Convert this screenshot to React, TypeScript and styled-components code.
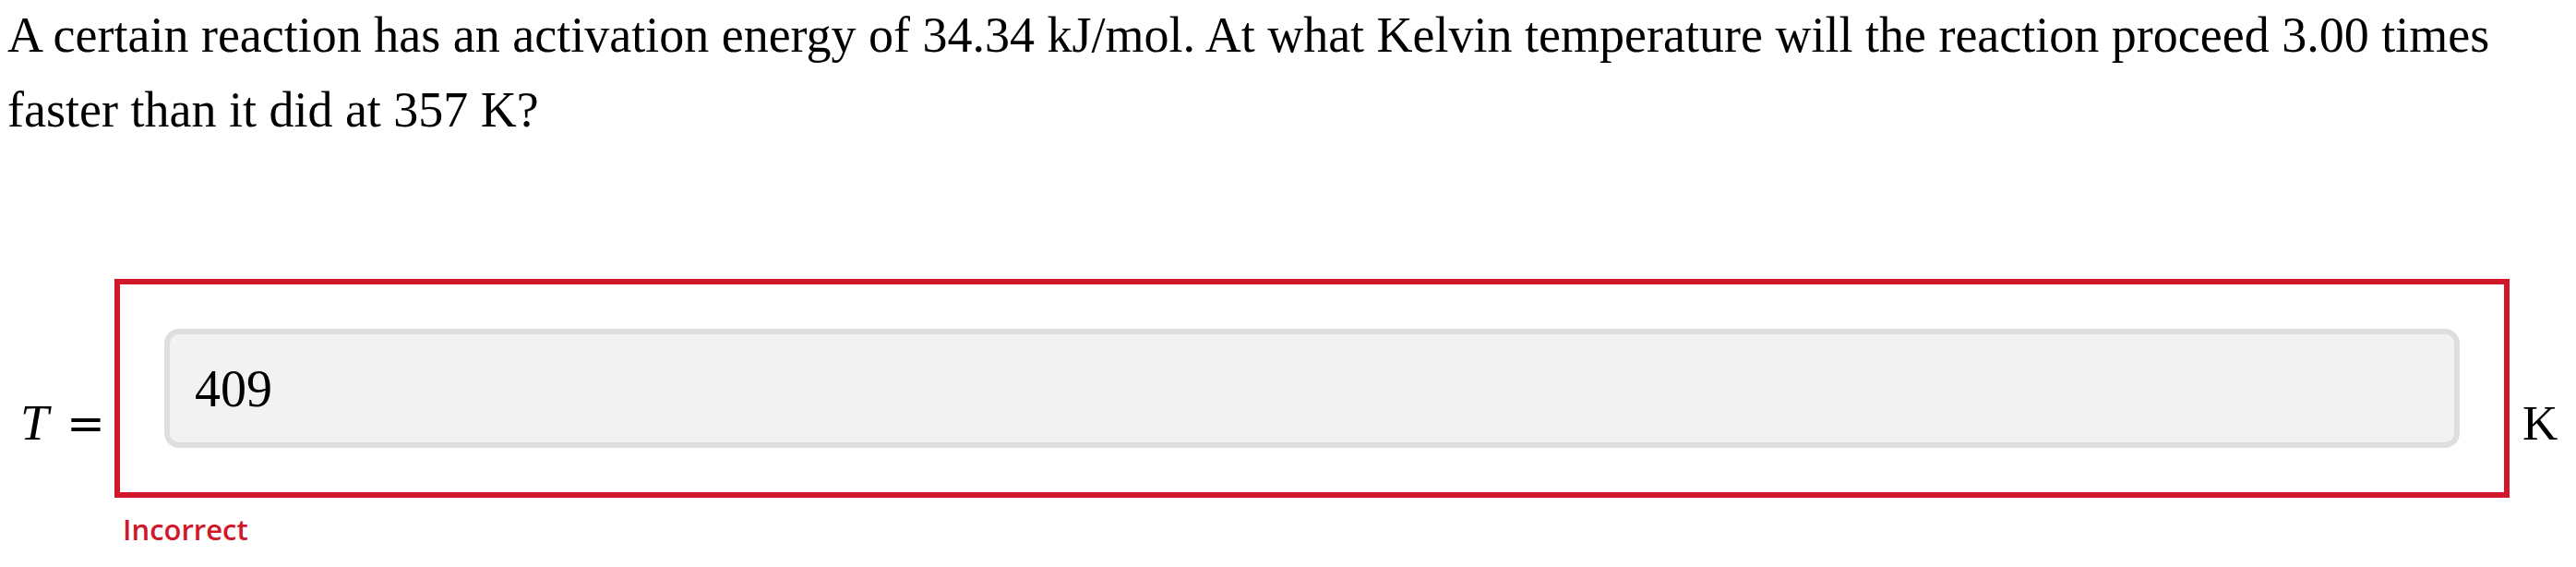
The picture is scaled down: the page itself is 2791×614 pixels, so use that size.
import React from "react";
import styled, { createGlobalStyle } from "styled-components";

const Global = createGlobalStyle`
  html, body { margin: 0; padding: 0; background: #ffffff; }
  body { font-family: "Liberation Serif", "Times New Roman", serif; color: #000; }
`;

const Page = styled.div`
  padding: 0 8px;
`;

const Question = styled.p`
  margin: -2px 0 0;
  font-size: 54px;
  line-height: 81px;
`;

const AnswerRow = styled.div`
  display: flex;
  align-items: flex-start;
  margin-top: 142px;
  padding-left: 14px;
`;

const MathLabel = styled.div`
  box-sizing: border-box;
  width: 102px;
  padding-right: 10px;
  display: flex;
  align-items: baseline;
  justify-content: space-between;
  margin-top: 126px;
  font-size: 55px;
  line-height: 60px;
`;

const Var = styled.span`
  font-style: italic;
`;

const Equals = styled.span`
  font-family: "DejaVu Serif", "Liberation Serif", serif;
  font-size: 50px;
`;

const FieldColumn = styled.div`
  display: flex;
  flex-direction: column;
`;

const FeedbackBox = styled.div<{ $state: "incorrect" | "correct" }>`
  box-sizing: border-box;
  width: 2595px;
  padding: 48px;
  border: 6px solid ${(p) => (p.$state === "incorrect" ? "#d0182a" : "#1a8a3a")};
`;

const NumberInput = styled.div`
  box-sizing: border-box;
  height: 129px;
  display: flex;
  align-items: center;
  padding: 0 27px;
  background: #f2f2f2;
  border: 6px solid #dedede;
  border-radius: 16px;
  font-size: 56px;
  color: #000;
`;

const Feedback = styled.div`
  margin-top: 14px;
  padding-left: 9px;
  font-family: "Open Sans", "Noto Sans", sans-serif;
  font-weight: 600;
  font-size: 31px;
  line-height: 40px;
  color: #d0182a;
`;

const Unit = styled.div`
  margin-top: 126px;
  margin-left: 14px;
  font-size: 53px;
  line-height: 60px;
`;

export default function App() {
  return (
    <Page>
      <Global />
      <Question>
        A certain reaction has an activation energy of 34.34 kJ/mol. At what Kelvin temperature will the
        reaction proceed 3.00 times faster than it did at 357 K?
      </Question>
      <AnswerRow>
        <MathLabel>
          <Var>T</Var>
          <Equals>=</Equals>
        </MathLabel>
        <FieldColumn>
          <FeedbackBox $state="incorrect">
            <NumberInput>409</NumberInput>
          </FeedbackBox>
          <Feedback>Incorrect</Feedback>
        </FieldColumn>
        <Unit>K</Unit>
      </AnswerRow>
    </Page>
  );
}
